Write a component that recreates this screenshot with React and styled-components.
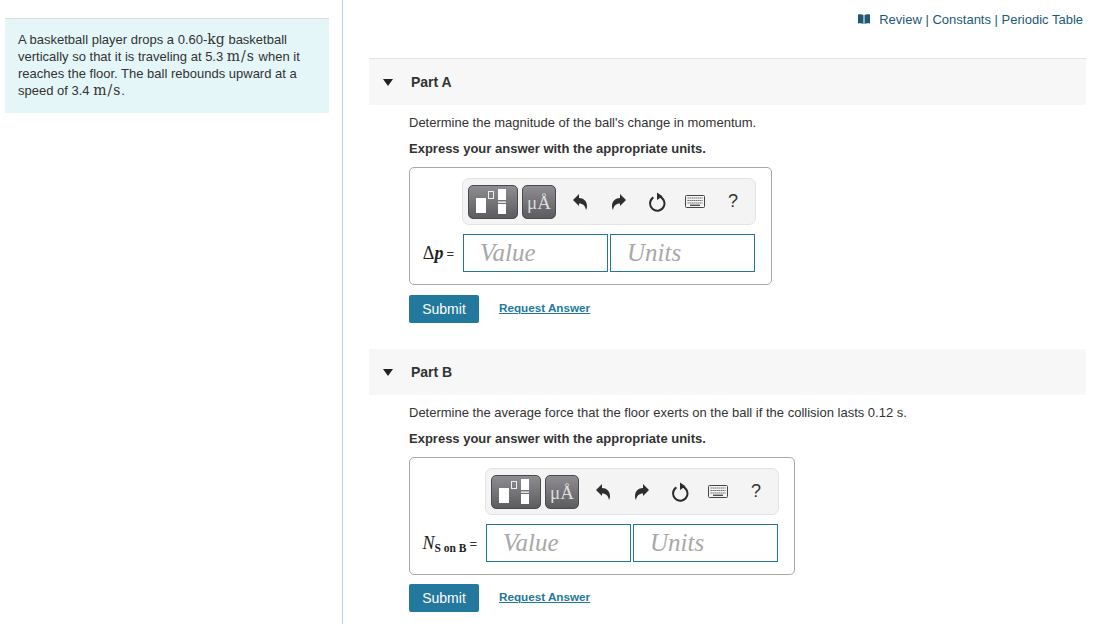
import React from 'react';
import styled, { createGlobalStyle } from 'styled-components';

const GlobalStyle = createGlobalStyle`
  html, body {
    margin: 0;
    padding: 0;
    background: #fff;
    font-family: "Liberation Sans", Arial, sans-serif;
    color: #333;
  }
`;

const Undo = ({ flip }) => (
  <svg width="14" height="16" viewBox="0 0 14 16" style={flip ? { transform: 'scaleX(-1)' } : undefined}>
    <path d="M0 6 6 0v4c4.500 0 8 3 8 8 0 1.600-.4 3-1 4-.5-3.800-3-6.500-7-6.500V12z" fill="#2e2e2e" />
  </svg>
);

const Reset = () => (
  <svg width="18" height="20" viewBox="0 0 18 20">
    <path d="M5.400 5.400a7.200 7.200 0 1 0 4.300-1.100" fill="none" stroke="#2b2b2b" strokeWidth="2" />
    <path d="M9 .5 14.500 4.300 9 8z" fill="#2b2b2b" />
  </svg>
);

const Keyboard = () => (
  <svg width="20" height="13" viewBox="0 0 20 13">
    <rect x=".5" y=".5" width="19" height="12" rx="1" fill="#f4f4f4" stroke="#444" />
    <path d="M2.500 3h15M2.500 5.500h15M2.500 8h15" stroke="#555" strokeWidth="1.200" strokeDasharray="1.300 .7" />
    <path d="M5 10.300h10" stroke="#444" strokeWidth="1.300" />
  </svg>
);

const BookIcon = () => (
  <svg width="12" height="10" viewBox="0 0 12 10">
    <path d="M0 .5C2 0 4 0 5.500 1v9C4 9.200 2 9.200 0 9.600zM12 .5C10 0 8 0 6.500 1v9c1.500-.8 3.500-.8 5.500-.4z" fill="#1c5a75" />
  </svg>
);

const TemplateGlyph = () => (
  <svg width="48" height="32" viewBox="0 0 48 32">
    <rect x="7" y="12" width="10" height="15" fill="#fff" />
    <rect x="19.500" y="5.500" width="5" height="7" fill="none" stroke="#eee" />
    <rect x="29" y="3" width="8" height="11" fill="#fff" />
    <rect x="29" y="15.500" width="8" height="1.300" fill="#fff" />
    <rect x="29" y="18" width="8" height="10" fill="#fff" />
  </svg>
);

const Answer = ({ label, shift }) => (
  <AnswerBox $wide={shift}>
    <ToolbarRow $offset={shift ? 76 : 53}>
      <Toolbar>
        <ToolButton $w={50}><TemplateGlyph /></ToolButton>
        <ToolButton $w={34}><Mu>μÅ</Mu></ToolButton>
        <IconSlot $w={40}><Undo /></IconSlot>
        <IconSlot $w={38}><Undo flip /></IconSlot>
        <IconSlot $w={38}><Reset /></IconSlot>
        <IconSlot $w={38}><Keyboard /></IconSlot>
        <Help>?</Help>
      </Toolbar>
    </ToolbarRow>
    <InputRow>
      <SymbolCell $w={shift ? 76 : 53}>{label}</SymbolCell>
      <Field>Value</Field>
      <Field>Units</Field>
    </InputRow>
  </AnswerBox>
);

const Part = ({ title, question, label, shift, first }) => (
  <section>
    <PartHeader $first={first}>
      <Caret />
      <PartTitle>{title}</PartTitle>
    </PartHeader>
    <PartBody>
      <Question>{question}</Question>
      <Instruction>Express your answer with the appropriate units.</Instruction>
      <Answer label={label} shift={shift} />
      <Actions $tight={shift}>
        <SubmitButton>Submit</SubmitButton>
        <RequestLink>Request Answer</RequestLink>
      </Actions>
    </PartBody>
  </section>
);

export default function App() {
  return (
    <Page>
      <GlobalStyle />
      <Sidebar>
        <Intro>
          <IntroLine>A basketball player drops a 0.60-<MathUnit>kg</MathUnit> basketball</IntroLine>
          <IntroLine>vertically so that it is traveling at 5.3 <MathUnit $wide>m/s</MathUnit> when it</IntroLine>
          <IntroLine>reaches the floor. The ball rebounds upward at a</IntroLine>
          <IntroLine>speed of 3.4 <MathUnit $wide>m/s</MathUnit>.</IntroLine>
        </Intro>
      </Sidebar>
      <Main>
        <TopLinks>
          <BookIcon />
          <TopText>Review | Constants | Periodic Table</TopText>
        </TopLinks>
        <Part
          first
          title="Part A"
          question="Determine the magnitude of the ball's change in momentum."
          label={<><Sym>Δ<b><i>p</i></b></Sym> =</>}
        />
        <Part
          shift
          title="Part B"
          question="Determine the average force that the floor exerts on the ball if the collision lasts 0.12 s."
          label={<><Sym><i>N</i><Sub>S on B</Sub></Sym> =</>}
        />
      </Main>
    </Page>
  );
}

const Page = styled.div`
  display: flex;
  width: 1101px;
  height: 624px;
  overflow: hidden;
`;

const Sidebar = styled.aside`
  box-sizing: border-box;
  width: 343px;
  flex-shrink: 0;
  padding: 18px 13px 0 5px;
  border-right: 1px solid #b9cfdc;
`;

const Intro = styled.div`
  box-sizing: border-box;
  height: 95px;
  padding: 12px 13px 0 13px;
  background: #e5f6f8;
  border-top: 1px solid #dcdfe1;
  font-size: 13px;
  color: #333;
`;

const IntroLine = styled.div`
  height: 17px;
  line-height: 17px;
  white-space: nowrap;
`;

const MathUnit = styled.span`
  display: inline-block;
  font-family: "DejaVu Serif", "Liberation Serif", serif;
  font-size: 14px;
  line-height: 14px;
  letter-spacing: ${p => (p.$wide ? '1px' : '0')};
`;

const Main = styled.main`
  width: 717px;
  margin-left: 26px;
  flex-shrink: 0;
`;

const TopLinks = styled.div`
  display: flex;
  align-items: center;
  justify-content: flex-end;
  gap: 9px;
  height: 58px;
  padding: 0 3px 20px 0;
  box-sizing: border-box;
`;

const TopText = styled.span`
  font-size: 13px;
  color: #1c5a75;
`;

const PartHeader = styled.div`
  box-sizing: border-box;
  display: flex;
  align-items: center;
  height: ${p => (p.$first ? 47 : 46)}px;
  padding-left: 14px;
  background: #f7f7f7;
  border-top: ${p => (p.$first ? '1px solid #e2e2e2' : 'none')};
`;

const Caret = styled.span`
  width: 0;
  height: 0;
  border-left: 5.500px solid transparent;
  border-right: 5.500px solid transparent;
  border-top: 7px solid #222;
`;

const PartTitle = styled.span`
  margin-left: 18px;
  font-size: 14px;
  font-weight: bold;
  color: #333;
`;

const PartBody = styled.div`
  padding: 9px 0 26px 40px;
`;

const Question = styled.div`
  font-size: 13px;
  line-height: 17px;
  color: #333;
`;

const Instruction = styled.div`
  margin-top: 9px;
  font-size: 13px;
  line-height: 17px;
  font-weight: bold;
  color: #333;
`;

const AnswerBox = styled.div`
  box-sizing: border-box;
  width: ${p => (p.$wide ? 386 : 363)}px;
  height: 118px;
  margin-top: 10px;
  padding-top: 10px;
  border: 1px solid #a9a9a9;
  border-radius: 5px;
`;

const ToolbarRow = styled.div`
  padding-left: ${p => p.$offset - 1}px;
`;

const Toolbar = styled.div`
  box-sizing: border-box;
  display: flex;
  align-items: center;
  width: 294px;
  height: 47px;
  padding-left: 5px;
  background: #f4f4f4;
  border: 1px solid #e3e3e3;
  border-radius: 7px;
`;

const ToolButton = styled.div`
  box-sizing: border-box;
  display: flex;
  align-items: center;
  justify-content: center;
  width: ${p => p.$w}px;
  height: 34px;
  margin-right: 4px;
  background: linear-gradient(#8f8d92, #5c5b5f);
  border: 1px solid #4b4b4d;
  border-radius: 5px;
`;

const Mu = styled.span`
  font-family: "Liberation Serif", serif;
  font-size: 19px;
  color: #dcdcdc;
  margin-top: 3px;
`;

const IconSlot = styled.div`
  display: flex;
  align-items: center;
  justify-content: center;
  width: ${p => p.$w}px;
  height: 34px;
`;

const Help = styled.div`
  width: 38px;
  text-align: center;
  font-size: 18px;
  color: #333;
`;

const InputRow = styled.div`
  display: flex;
  align-items: stretch;
  gap: 2px;
  margin-top: 9px;
`;

const SymbolCell = styled.div`
  box-sizing: border-box;
  display: flex;
  align-items: center;
  justify-content: flex-end;
  gap: 3px;
  width: ${p => p.$w}px;
  margin-right: -2px;
  padding-right: 9px;
  font-size: 13px;
  color: #333;
`;

const Sym = styled.span`
  font-family: "Liberation Serif", serif;
  font-size: 18px;
  color: #222;
  white-space: nowrap;
`;

const Sub = styled.sub`
  font-size: 11.500px;
  font-weight: bold;
  vertical-align: -3px;
`;

const Field = styled.div`
  box-sizing: border-box;
  width: 145px;
  height: 38px;
  padding-left: 16px;
  border: 1px solid #22779b;
  font-family: "Liberation Serif", serif;
  font-style: italic;
  font-size: 25px;
  line-height: 35px;
  color: #a8a8a8;
`;

const Actions = styled.div`
  display: flex;
  align-items: center;
  margin-top: ${p => (p.$tight ? 9 : 10)}px;
`;

const SubmitButton = styled.button`
  width: 70px;
  height: 28px;
  padding: 0;
  background: #23789e;
  border: none;
  border-radius: 2px;
  color: #fff;
  font-family: "Liberation Sans", Arial, sans-serif;
  font-size: 14px;
`;

const RequestLink = styled.a`
  margin-left: 20px;
  margin-top: -4px;
  font-size: 11.700px;
  font-weight: bold;
  color: #23789e;
  text-decoration: underline;
`;
